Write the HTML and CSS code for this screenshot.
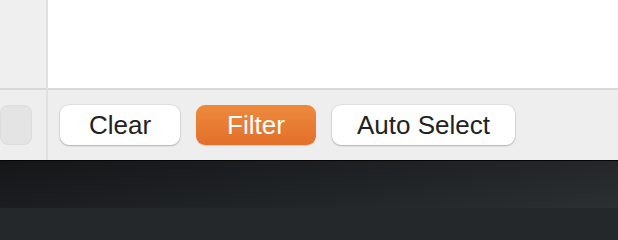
FILE: index.html
```html
<!DOCTYPE html>
<html>
<head>
<meta charset="utf-8">
<link rel="stylesheet" href="styles.css">
</head>
<body>
<div class="window">
  <div class="side">
    <div class="side-top"></div>
    <div class="side-bar">
      <div class="ghost-btn"></div>
    </div>
  </div>
  <div class="divider"></div>
  <div class="main">
    <div class="main-top"></div>
    <div class="toolbar">
      <button class="btn btn-clear">Clear</button>
      <button class="btn btn-primary btn-filter">Filter</button>
      <button class="btn btn-auto">Auto Select</button>
    </div>
  </div>
</div>
<div class="desktop"></div>
</body>
</html>
```
FILE: styles.css
```css
html {
  background: #24282a;
}
html, body {
  margin: 0;
  padding: 0;
  font-family: "Liberation Sans", Arial, sans-serif;
}
body {
  width: 618px;
  min-height: 208px;
  overflow: hidden;
}
.window {
  display: flex;
  height: 160px;
  background: #eeeeee;
}
.side {
  width: 46px;
  display: flex;
  flex-direction: column;
}
.side-top {
  height: 88px;
  background: #efefef;
  border-bottom: 2px solid #d8d8d8;
}
.side-bar {
  flex: 1;
  display: flex;
  align-items: center;
  justify-content: flex-end;
  background: #eeeeee;
  overflow: hidden;
}
.ghost-btn {
  width: 40px;
  height: 38px;
  margin-right: 14px;
  background: #e4e4e4;
  border: 1px solid #dcdcdc;
  border-radius: 8px;
}
.divider {
  width: 2px;
  background: #e0e0e0;
}
.main {
  flex: 1;
  display: flex;
  flex-direction: column;
}
.main-top {
  height: 88px;
  background: #ffffff;
  border-bottom: 2px solid #d9d9d9;
}
.toolbar {
  flex: 1;
  display: flex;
  align-items: center;
  gap: 16px;
  padding-left: 12px;
  background: #eeeeee;
}
.btn {
  height: 40px;
  border: none;
  border-radius: 9px;
  background: #ffffff;
  color: #222222;
  font-family: "Liberation Sans", Arial, sans-serif;
  font-size: 26px;
  padding: 0;
  box-shadow: 0 0 0 1px rgba(0, 0, 0, 0.05), 0 1px 2px rgba(0, 0, 0, 0.22);
}
.btn-clear { width: 120px; }
.btn-filter { width: 120px; }
.btn-auto { width: 183px; }
.btn-primary {
  background: linear-gradient(#ed8a3d, #e36f2a);
  color: #ffffff;
  box-shadow: 0 1px 1px rgba(0, 0, 0, 0.12);
}
.desktop {
  height: 47px;
  border-top: 1px solid #050505;
  background: linear-gradient(170deg, #141618 0%, #1f2224 50%, #2b2f32 100%);
}
```
